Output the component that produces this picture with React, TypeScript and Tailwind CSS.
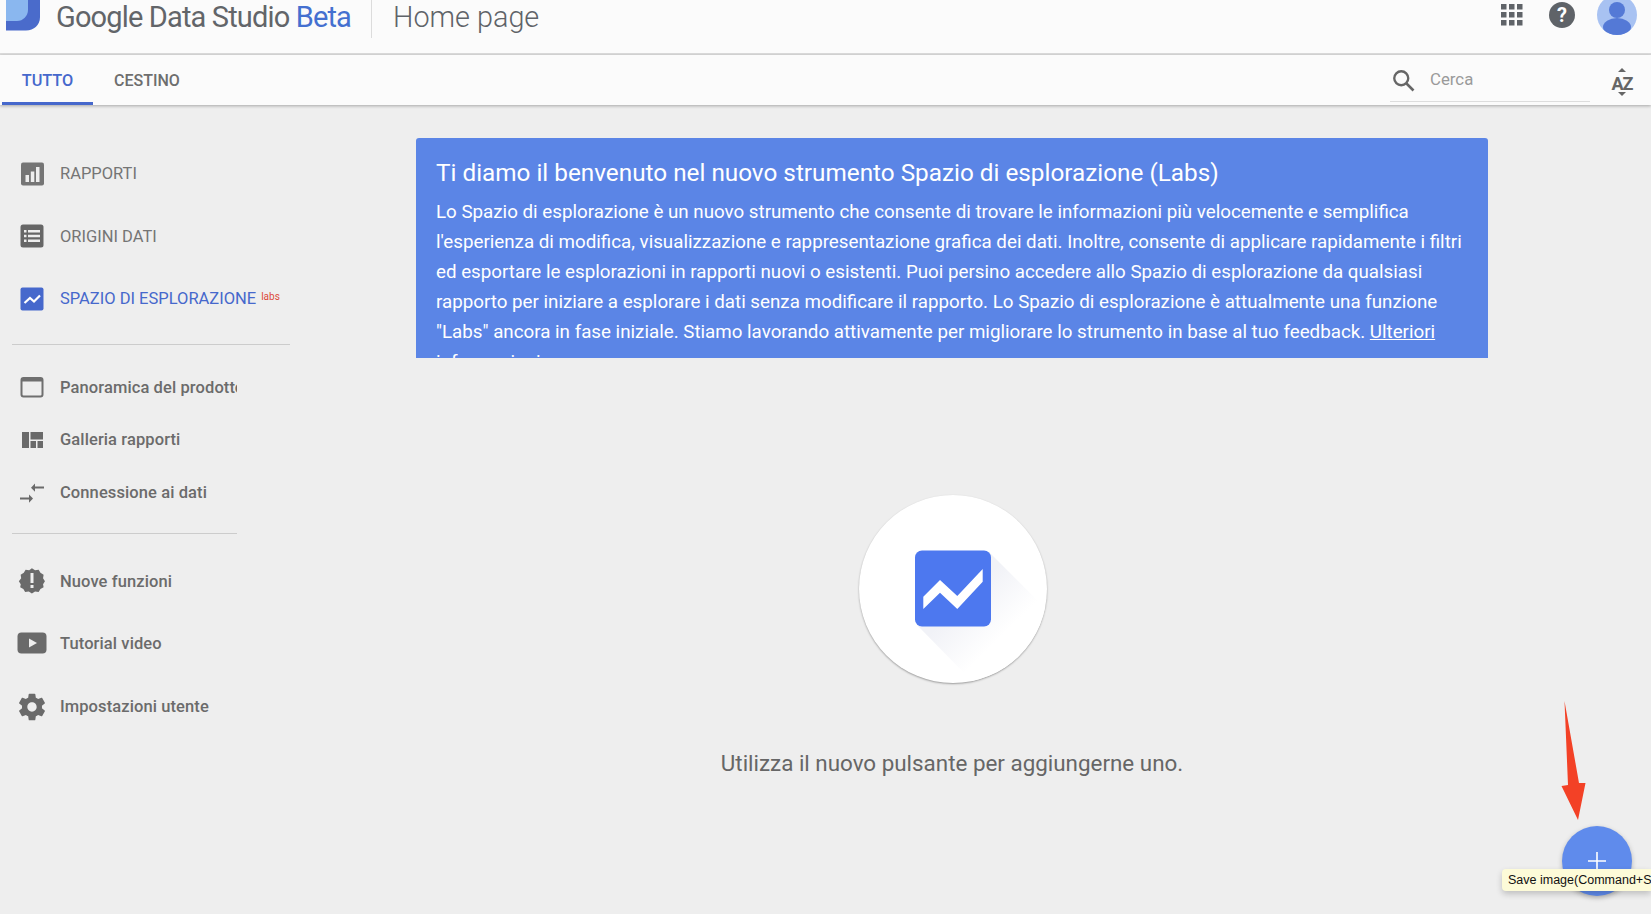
import React from "react";

const F = "font-['Roboto',sans-serif]";

function NavIcon({ children }: { children: React.ReactNode }) {
  return (
    <svg width="32" height="32" viewBox="0 0 32 32" className="shrink-0">
      {children}
    </svg>
  );
}

const icons = {
  bar: (
    <NavIcon>
      <rect x="5" y="4.500" width="23" height="23" rx="2" fill="#757575" />
      <rect x="9.500" y="17" width="3.500" height="7" fill="#eee" />
      <rect x="14.800" y="13.500" width="3.500" height="10.500" fill="#eee" />
      <rect x="20" y="9" width="3.500" height="15" fill="#eee" />
    </NavIcon>
  ),
  list: (
    <NavIcon>
      <rect x="4.500" y="3.500" width="23" height="23" rx="2.500" fill="#666" />
      <path d="M8 9h2.500v2.500H8zM12 9h12v2.500H12zM8 13.800h2.500v2.500H8zM12 13.800h12v2.500H12zM8 18.500h2.500V21H8zM12 18.500h12V21H12z" fill="#eee" />
    </NavIcon>
  ),
  explore: (
    <NavIcon>
      <rect x="4.500" y="4.500" width="23" height="23" rx="2" fill="#4668cc" />
      <path d="M8.500 20l5.500-5 4 3.500 6-6" fill="none" stroke="#fff" strokeWidth="2.200" />
    </NavIcon>
  ),
  win: (
    <NavIcon>
      <rect x="5.500" y="6" width="21" height="18.500" rx="2" fill="none" stroke="#6f6f6f" strokeWidth="2" />
      <rect x="5.500" y="6" width="21" height="3.500" fill="#6f6f6f" />
    </NavIcon>
  ),
  gallery: (
    <NavIcon>
      <path d="M6 8h7v16H6zM14.500 8H27v7.500H14.500zM14.500 17H20v7h-5.500zM21.500 17H27v7h-5.500z" fill="#6a6a6a" />
    </NavIcon>
  ),
  conn: (
    <NavIcon>
      <path d="M19 9.500v-3L15 10.800l4 4v-3.300h9v-2zM4 20.500v2h9v3.200l4-4.200-4-4v3z" fill="#6a6a6a" />
    </NavIcon>
  ),
  news: (
    <NavIcon>
      <path d="M16 2.500l3.500 2.200 4-.6 2 3.500 3.500 2-.6 4L30.500 17l-2.100 3.400.6 3.100-3.500 2-2 3.500-4-.6-3.500 2.100-3.500-2.100-4 .6-2-3.500-3.500-2 .6-3.100L1.500 17l2.600-3.400-.6-4 3.500-2 2-3.500 4 .6z" fill="#6a6a6a" transform="translate(1.500 0) scale(.9)" />
      <rect x="14.500" y="7" width="3" height="10" fill="#eee" />
      <rect x="14.500" y="19" width="3" height="3" fill="#eee" />
    </NavIcon>
  ),
  video: (
    <NavIcon>
      <rect x="1.500" y="4.500" width="29" height="21" rx="4" fill="#6a6a6a" />
      <path d="M13 10.500l8 4.500-8 4.500z" fill="#eee" />
    </NavIcon>
  ),
  gear: (
    <svg width="32" height="32" viewBox="0 0 24 24" className="shrink-0">
      <path
        fill="#6a6a6a"
        d="M19.430 12.980c.04-.32.07-.64.07-.98s-.03-.66-.07-.98l2.110-1.650c.19-.15.24-.42.12-.64l-2-3.460c-.12-.22-.39-.3-.61-.22l-2.490 1c-.52-.4-1.080-.73-1.690-.98l-.38-2.650A.488.488 0 0 0 14 2h-4c-.25 0-.46.180-.49.420l-.38 2.650c-.61.250-1.170.590-1.690.98l-2.490-1c-.23-.09-.49 0-.61.220l-2 3.460c-.13.220-.07.490.12.640l2.110 1.650c-.04.320-.07.650-.07.980s.03.660.07.980l-2.110 1.650c-.19.150-.24.420-.12.640l2 3.460c.12.220.39.300.61.220l2.490-1c.52.400 1.080.730 1.690.980l.38 2.650c.03.240.24.420.49.420h4c.25 0 .46-.180.49-.420l.38-2.650c.61-.250 1.170-.590 1.690-.980l2.490 1c.23.090.49 0 .61-.220l2-3.460c.12-.22.07-.49-.12-.64l-2.110-1.650zM12 15.500c-1.930 0-3.500-1.570-3.500-3.500s1.570-3.500 3.500-3.500 3.500 1.570 3.500 3.500-1.570 3.500-3.500 3.500z"
      />
    </svg>
  ),
};

function Item({ icon, label, mt, bold, active, clip, labs }: { icon: React.ReactNode; label: string; mt: string; bold?: boolean; active?: boolean; clip?: boolean; labs?: boolean }) {
  return (
    <div className={`flex items-center h-8 pl-4 ${mt}`}>
      {icon}
      <span
        className={`ml-3 text-[16.500px] whitespace-nowrap ${bold ? "font-medium text-[#6b6b6b] tracking-[0.1px]" : "text-[#757575]"} ${active ? "!text-[#4668cc]" : ""} ${clip ? "w-[177px] overflow-hidden" : ""}`}
      >
        {label}
      </span>
      {labs && <span className="ml-[5px] mb-[6px] text-[10px] text-[#dd4b39]">labs</span>}
    </div>
  );
}

export default function App() {
  return (
    <div className={`${F} relative w-[1651px] h-[914px] overflow-hidden bg-[#eeeeee]`}>
      <header className="h-[55px] bg-[#fbfbfb] border-b-2 border-[#dcdcdc] flex items-start overflow-hidden">
        <svg width="40" height="32" viewBox="0 0 40 32" className="ml-[5px] shrink-0">
          <path d="M0 30.500V0h34v17c0 8-6 13.500-14 13.500z" fill="#4a6bcb" transform="translate(1 0)" />
          <path d="M0 21V0h22v10c0 6-5 11-11 11z" fill="#8ab7ef" transform="translate(1 0)" />
        </svg>
        <div className="ml-[11px] mt-[-1px] text-[29px] leading-[36px] whitespace-nowrap text-[#626569] tracking-[-0.85px]">
          Google Data Studio <span className="text-[#4470d0]">Beta</span>
        </div>
        <div className="ml-5 h-[38px] w-px bg-[#dcdcdc]" />
        <div className="ml-[21px] mt-[-1px] text-[28.800px] leading-[36px] font-light text-[#5f6368] whitespace-nowrap">Home page</div>
        <div className="ml-auto flex items-start">
          <svg width="22" height="22" viewBox="0 0 22 22" className="mt-[4px]" fill="#5f6368">
            <path d="M0 0h5.500v5.500H0zM8 0h5.500v5.500H8zM16 0h5.500v5.500H16zM0 8h5.500v5.500H0zM8 8h5.500v5.500H8zM16 8h5.500v5.500H16zM0 16h5.500v5.500H0zM8 16h5.500v5.500H8zM16 16h5.500v5.500H16z" />
          </svg>
          <div className="ml-[26px] mt-[2px] w-[26px] h-[26px] rounded-full bg-[#5f6368] flex items-center justify-center text-white text-[20px] font-bold leading-none">?</div>
          <svg width="40" height="40" viewBox="0 0 40 40" className="ml-[22px] mr-[14px] mt-[-5px]">
            <defs>
              <clipPath id="av"><circle cx="20" cy="20" r="20" /></clipPath>
            </defs>
            <g clipPath="url(#av)">
              <rect width="40" height="40" fill="#a8c2f2" />
              <circle cx="20" cy="15" r="8" fill="#5479d6" />
              <ellipse cx="20" cy="32" rx="14" ry="9" fill="#5479d6" />
            </g>
          </svg>
        </div>
      </header>

      <nav className="relative h-[50px] bg-[#fbfbfb] flex shadow-[0_1px_3px_rgba(0,0,0,0.3)]">
        <div className="ml-[2px] w-[91px] h-[50px] pt-[6px] flex items-center justify-center text-[16.300px] font-medium text-[#4668cc] border-b-[3px] border-[#4668cc]">TUTTO</div>
        <div className="ml-[21px] h-[50px] pt-[2px] flex items-center text-[16px] font-medium text-[#6e6e6e]">CESTINO</div>
        <div className="ml-auto flex items-start">
          <div className="relative w-[200px] h-[47px] pt-[3px] border-b border-[#dddddd] flex items-center">
            <svg width="28" height="28" viewBox="0 0 24 24" className="ml-[-1px]" fill="none" stroke="#666" strokeWidth="2">
              <circle cx="10.500" cy="10.500" r="6" />
              <path d="M15 15l6 6" strokeWidth="2.200" />
            </svg>
            <span className="ml-[13px] text-[16.800px] text-[#9a9a9a]">Cerca</span>
          </div>
          <div className="w-[52px] mr-[3px] ml-[6px] h-[50px] flex items-center justify-center relative">
            <svg width="12" height="28" viewBox="0 0 12 28" className="absolute left-[20px] top-[13px]" fill="#666">
              <path d="M6 0l4 4H2zM6 28l-4-4h8z" />
            </svg>
            <span className="relative text-[18px] font-bold text-[#666] tracking-[-1px] mt-[6px]">AZ</span>
          </div>
        </div>
      </nav>

      <div className="flex">
        <aside className="w-[416px] shrink-0 pt-[53px]">
          <Item icon={icons.bar} label="RAPPORTI" mt="" />
          <Item icon={icons.list} label="ORIGINI DATI" mt="mt-[31px]" />
          <Item icon={icons.explore} label="SPAZIO DI ESPLORAZIONE" mt="mt-[30px]" active labs />
          <div className="ml-3 mt-[29px] w-[278px] h-px bg-[#cccccc]" />
          <Item icon={icons.win} label="Panoramica del prodotto" mt="mt-[27px]" bold clip />
          <Item icon={icons.gallery} label="Galleria rapporti" mt="mt-[20px]" bold />
          <Item icon={icons.conn} label="Connessione ai dati" mt="mt-[21px]" bold />
          <div className="ml-3 mt-[24px] w-[225px] h-px bg-[#cccccc]" />
          <Item icon={icons.news} label="Nuove funzioni" mt="mt-[32px]" bold />
          <Item icon={icons.video} label="Tutorial video" mt="mt-[30px]" bold />
          <Item icon={icons.gear} label="Impostazioni utente" mt="mt-[31px]" bold />
        </aside>

        <main className="w-[1072px] shrink-0 pt-[33px]">
          <section className="h-[220px] overflow-hidden rounded-t-[3px] bg-[#5b85e6] text-white px-5 pt-[20px]">
            <h1 className="text-[24.300px] leading-[30px] font-normal whitespace-nowrap">Ti diamo il benvenuto nel nuovo strumento Spazio di esplorazione (Labs)</h1>
            <p className="mt-[9px] text-[18.750px] leading-[30px]">
              Lo Spazio di esplorazione è un nuovo strumento che consente di trovare le informazioni più velocemente e semplifica l'esperienza di modifica, visualizzazione e rappresentazione grafica dei dati. Inoltre, consente di applicare rapidamente i filtri ed esportare le esplorazioni in rapporti nuovi o esistenti. Puoi persino accedere allo Spazio di esplorazione da qualsiasi rapporto per iniziare a esplorare i dati senza modificare il rapporto. Lo Spazio di esplorazione è attualmente una funzione "Labs" ancora in fase iniziale. Stiamo lavorando attivamente per migliorare lo strumento in base al tuo feedback. <span className="underline">Ulteriori informazioni</span>
            </p>
          </section>
          <div className="flex flex-col items-center">
            <div className="mt-[137px] ml-[2px] w-[188px] h-[188px] rounded-full bg-white shadow-[0_1px_2px_rgba(0,0,0,0.35)] relative overflow-hidden">
              <svg width="188" height="188" viewBox="0 0 188 188" className="absolute inset-0">
                <defs>
                  <linearGradient id="sh" gradientUnits="userSpaceOnUse" x1="105" y1="105" x2="142" y2="142">
                    <stop offset="0" stopColor="#f1f2f7" />
                    <stop offset="1" stopColor="#ffffff" />
                  </linearGradient>
                </defs>
                <path d="M130 57l58 58v73h-73l-57-58z" fill="url(#sh)" />
                <rect x="56" y="55.500" width="76" height="76" rx="7" fill="#4d78ef" />
                <path d="M64.300 101.700L81 85l17.300 16 25.400-27v12.700L98.300 114 81 97.700 64.300 114z" fill="#fff" />
              </svg>
            </div>
            <p className="mt-[67px] text-[22.400px] leading-[26px] text-[#666] whitespace-nowrap">Utilizza il nuovo pulsante per aggiungerne uno.</p>
          </div>
        </main>
      </div>

      {/* floating action button, annotation arrow and tooltip */}
      <div className="absolute left-[1562px] top-[826px] w-[70px] h-[70px] rounded-full bg-[#5f8bec] shadow-[0_2px_5px_rgba(0,0,0,0.25)] flex items-center justify-center">
        <svg width="18" height="18" viewBox="0 0 18 18" stroke="#fff" strokeWidth="1.600"><path d="M9 0v18M0 9h18" /></svg>
      </div>
      <svg width="26" height="122" viewBox="0 0 26 122" className="absolute left-[1561px] top-[701px]">
        <path d="M3.500 0L18 82l6.500 0-7.500 37L0.500 85l6.500-1z" fill="#f34126" />
      </svg>
      <div className="absolute left-[1502px] top-[869px] w-[149px] h-[22px] rounded-l-[4px] bg-[#fdfbd8] shadow-[0_3px_6px_rgba(0,0,0,0.2)] pl-[6px] pt-[1px] flex items-center overflow-hidden font-['Liberation_Sans',sans-serif] text-[12.500px] text-[#111] whitespace-nowrap">
        Save image(Command+S
      </div>
    </div>
  );
}
